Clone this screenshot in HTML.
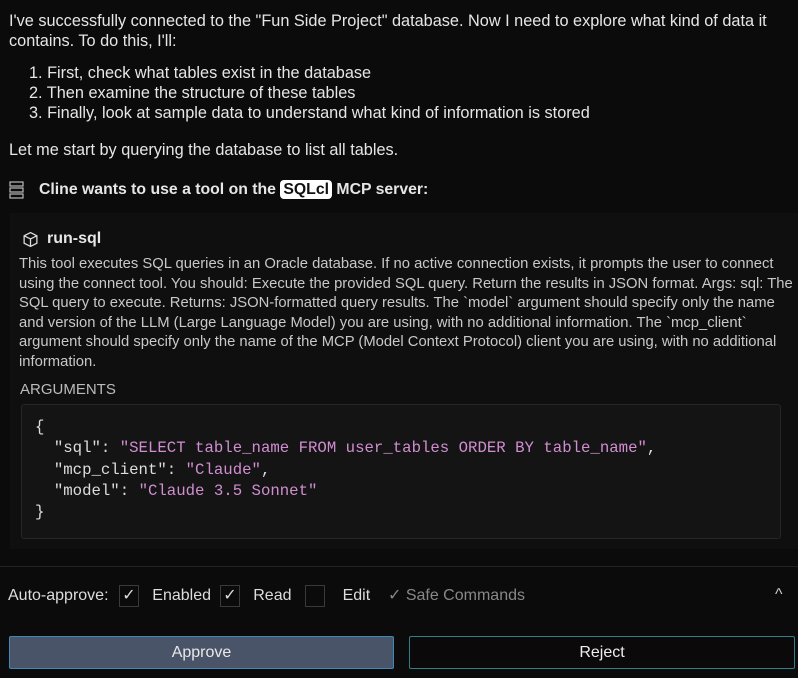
<!DOCTYPE html>
<html><head><style>
body{margin:0;width:798px;height:678px;background:#0b0b0b;color:#e6e6e6;font-family:"Liberation Sans",sans-serif;font-size:16.3px;overflow:hidden;position:relative}
.a{position:absolute;white-space:nowrap}
.p{left:9px;line-height:20px}
.panel{position:absolute;left:10px;top:213px;width:788px;height:336px;background:#0f0f0f}
.desc{position:absolute;left:9px;top:42px;width:778px;font-size:14.8px;line-height:19.5px;color:#c8c8c8}
.code{position:absolute;left:11px;top:191px;width:758px;height:133px;background:#141414;border:1px solid #262626;border-radius:3px;font-family:"Liberation Mono",monospace;font-size:15.7px;line-height:21.3px;color:#ddd}
.s{color:#d08ed0}
.cb{display:inline-block;width:20px;height:22px;border:1px solid #3a3a3a;box-sizing:border-box;vertical-align:middle;text-align:center;line-height:20px;color:#ddd}
.btn{position:absolute;top:636px;height:33px;box-sizing:border-box;text-align:center;line-height:31px;font-size:16px;border-radius:2px}
</style></head><body>
<div class="a p" style="top:11px">I've successfully connected to the "Fun Side Project" database. Now I need to explore what kind of data it</div>
<div class="a p" style="top:31px">contains. To do this, I'll:</div>
<div class="a p" style="top:63px;left:29px">1. First, check what tables exist in the database</div>
<div class="a p" style="top:83px;left:29px">2. Then examine the structure of these tables</div>
<div class="a p" style="top:103px;left:29px">3. Finally, look at sample data to understand what kind of information is stored</div>
<div class="a p" style="top:140px">Let me start by querying the database to list all tables.</div>
<svg class="a" style="left:9px;top:181px" width="16" height="18" viewBox="0 0 16 18" fill="none" stroke="#bbb" stroke-width="1.2"><rect x="1" y="1" width="13" height="4"/><rect x="1" y="7" width="13" height="4"/><rect x="1" y="13" width="13" height="4"/></svg>
<div class="a" style="left:39px;top:180px;font-weight:bold;font-size:15.8px;line-height:20px">Cline wants to use a tool on the <span style="background:#fff;color:#111;padding:1px 3px;border-radius:4px">SQLcl</span> MCP server:</div>
<div class="panel">
<svg class="a" style="left:12px;top:18px" width="17" height="17" viewBox="0 0 16 16" fill="none" stroke="#ddd" stroke-width="1.2"><path d="M8 1.5L14 4.5V11.5L8 14.5L2 11.5V4.5Z M2 4.5L8 7.5L14 4.5 M8 7.5V14.5"/></svg>
<div class="a" style="left:37px;top:17px;font-weight:bold;font-size:16px">run-sql</div>
<div class="desc">This tool executes SQL queries in an Oracle database. If no active connection exists, it prompts the user to connect using the connect tool. You should: Execute the provided SQL query. Return the results in JSON format. Args: sql: The SQL query to execute. Returns: JSON-formatted query results. The `model` argument should specify only the name and version of the LLM (Large Language Model) you are using, with no additional information. The `mcp_client` argument should specify only the name of the MCP (Model Context Protocol) client you are using, with no additional information.</div>
<div class="a" style="left:10px;top:168px;font-size:15px;color:#bbb">ARGUMENTS</div>
<div class="code"><div style="position:absolute;left:13px;top:12px;white-space:pre">{
  "sql": <span class="s">"SELECT table_name FROM user_tables ORDER BY table_name"</span>,
  "mcp_client": <span class="s">"Claude"</span>,
  "model": <span class="s">"Claude 3.5 Sonnet"</span>
}</div></div>
</div>
<div class="a" style="left:0;top:566px;width:798px;height:1px;background:#222"></div>
<div class="a" style="left:8px;top:585px;font-size:16px;line-height:20px;color:#ddd">Auto-approve: <span class="cb" style="margin-left:6px">✓</span>&nbsp;&nbsp; Enabled &nbsp;<span class="cb">✓</span>&nbsp;&nbsp; Read &nbsp;&nbsp;<span class="cb"></span>&nbsp;&nbsp;&nbsp; Edit &nbsp;&nbsp; <span style="color:#888">✓ Safe Commands</span></div>
<div class="a" style="left:775px;top:586px;color:#ccc;font-size:16px">^</div>
<div class="btn" style="left:9px;width:385px;background:#4a5468;border:1px solid #3d8ab8;color:#e8e8e8">Approve</div>
<div class="btn" style="left:409px;width:386px;background:#0b0909;border:1px solid #2e7f8c;color:#eee">Reject</div>
</body></html>
